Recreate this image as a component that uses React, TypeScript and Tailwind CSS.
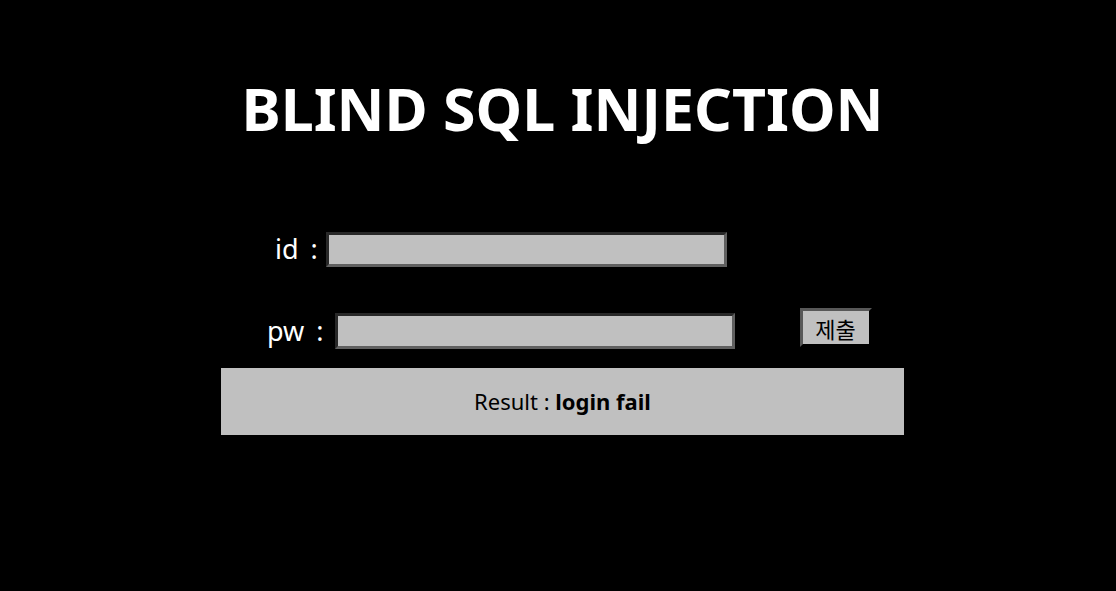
export default function App() {
  const font = { fontFamily: '"Noto Sans", "Noto Sans CJK KR", sans-serif' };

  return (
    <div className="min-h-[591px] w-full bg-black pt-[68px]" style={font}>
      <div className="ml-[221px] w-[683px]">
        <h1 className="text-center text-[59px] font-bold leading-[80px] text-white">BLIND SQL INJECTION</h1>

        <form className="mt-[83px]" onSubmit={(e) => e.preventDefault()}>
          <div className="flex items-center pl-[54px]">
            <label className="text-[27px] leading-[36px] text-white">
              id<span className="ml-[12px]">:</span>
            </label>
            <input
              type="text"
              className="ml-[8px] h-[35px] w-[401px] border-[3px] border-t-[#282828] border-l-[#282828] border-b-[#606060] border-r-[#606060] bg-[#c0c0c0] outline-none"
            />
          </div>

          <div className="mt-[46px] flex items-center pl-[46px]">
            <label className="text-[27px] leading-[36px] text-white">
              pw<span className="ml-[12px]">:</span>
            </label>
            <input
              type="password"
              className="ml-[11px] h-[36px] w-[400px] border-[3px] border-t-[#282828] border-l-[#282828] border-b-[#606060] border-r-[#606060] bg-[#c0c0c0] outline-none"
            />
            <button
              type="submit"
              className="ml-[65px] -mt-[7px] h-[39px] w-[72px] border-[3px] border-t-[#585858] border-l-[#585858] border-b-black border-r-black bg-[#c0c0c0] text-[22px] leading-none text-black"
              style={{ fontFamily: '"Noto Sans CJK KR", sans-serif' }}
            >
              제출
            </button>
          </div>
        </form>

        <div className="mt-[19px] flex h-[67px] items-center justify-center bg-[#c0c0c0] text-[22px] text-black">
          <span>Result :&nbsp;</span>
          <b className="font-bold">login fail</b>
        </div>
      </div>
    </div>
  );
}
